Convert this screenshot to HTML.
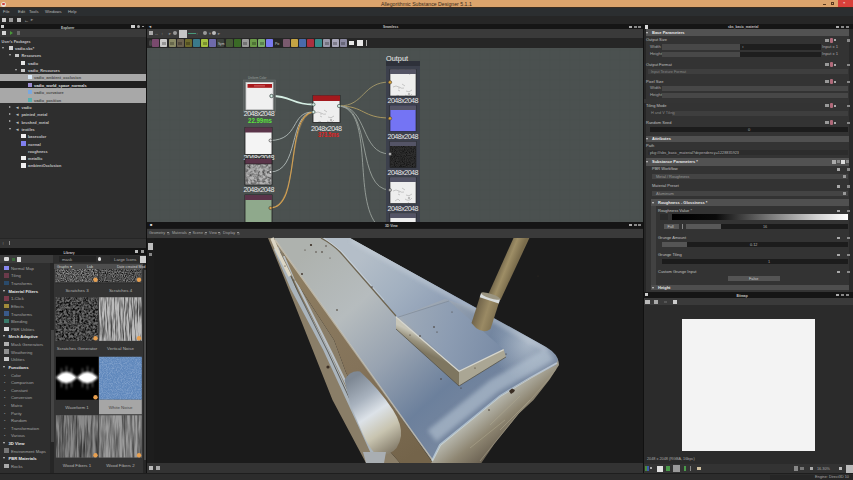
<!DOCTYPE html>
<html><head><meta charset="utf-8">
<style>
*{margin:0;padding:0;box-sizing:border-box}
html,body{width:853px;height:480px;overflow:hidden;background:#1e1e1e;font-family:"Liberation Sans",sans-serif;color:#c8c8c8}
.a{position:absolute}
.t{position:absolute;font-size:5px;line-height:6px;white-space:nowrap;padding-top:1px}
</style></head><body>
<!-- title bar -->
<div class="a" style="left:0;top:0;width:853px;height:8px;background:#dca46c;border-bottom:0.8px solid #3a2c20"></div>
<!-- menu -->
<div class="a" style="left:0;top:8px;width:853px;height:8px;background:#2b2e30"></div>
<div class="a" style="left:0;top:16px;width:853px;height:8px;background:#262626"></div>

<!-- explorer -->
<div class="a" style="left:0;top:24px;width:146px;height:224px;background:#2e2e2e"></div>
<div class="a" style="left:0;top:24px;width:146px;height:5px;background:#151515"></div>
<div class="a" style="left:0;top:29px;width:146px;height:8px;background:#3a3a3a"></div>
<div class="a" style="left:0;top:238px;width:146px;height:10px;background:#333"></div>


<!-- explorer content -->
<div class="a" style="left:0;top:73.6px;width:146px;height:7.4px;background:#a8a8a8"></div>
<div class="a" style="left:0;top:81px;width:146px;height:7px;background:#1f1f1f"></div>
<div class="a" style="left:0;top:88px;width:146px;height:15.3px;background:#a8a8a8"></div>
<div class="t" style="left:61px;top:23.9px;color:#c4c4c4;font-size:3.3px;font-weight:bold">Explorer</div>
<div class="a" style="left:1px;top:25.0px;width:3px;height:3px;background:#cfcfcf"></div>
<div class="a" style="left:2px;top:31.2px;width:3.5px;height:3.5px;background:#d8d8d8"></div>
<div class="a" style="left:10px;top:31px;width:0;height:0;border-top:2px solid transparent;border-bottom:2px solid transparent;border-left:3.5px solid #4a9a3a"></div>
<div class="a" style="left:17px;top:31.2px;width:3px;height:3.5px;background:#6a6a6a"></div>
<div class="t" style="left:1.5px;top:37.7px;color:#c2c2c2;font-size:3.7px;font-weight:bold">User's Packages</div>
<div class="a" style="left:2.0px;top:47.2px;width:0;height:0;border-left:1.5px solid transparent;border-right:1.5px solid transparent;border-top:2px solid #bbb"></div>
<div class="a" style="left:8.5px;top:46.2px;width:4px;height:4px;background:#d0d0d0"></div>
<div class="t" style="left:15px;top:45.2px;color:#c8c8c8;font-size:3.85px;font-weight:bold">vadio.sbs*</div>
<div class="a" style="left:8.5px;top:54.3px;width:0;height:0;border-left:1.5px solid transparent;border-right:1.5px solid transparent;border-top:2px solid #bbb"></div>
<div class="a" style="left:15px;top:53.8px;width:4px;height:3px;background:#c8c8c8"></div>
<div class="t" style="left:21.5px;top:52.3px;color:#c6c6c6;font-size:3.85px;font-weight:bold">Resources</div>
<div class="a" style="left:21px;top:60.9px;width:4px;height:4px;background:#e6e6e6"></div>
<div class="t" style="left:28px;top:59.9px;color:#c6c6c6;font-size:3.85px;font-weight:bold">vadio</div>
<div class="a" style="left:15.0px;top:69.4px;width:0;height:0;border-left:1.5px solid transparent;border-right:1.5px solid transparent;border-top:2px solid #bbb"></div>
<div class="a" style="left:21px;top:68.9px;width:4px;height:3px;background:#c8c8c8"></div>
<div class="t" style="left:28px;top:67.4px;color:#c6c6c6;font-size:3.85px;font-weight:bold">vadio_Resources</div>
<div class="a" style="left:27.5px;top:75.3px;width:4px;height:4px;background:#d8e8f8"></div>
<div class="t" style="left:34px;top:74.3px;color:#4a4a4a;font-size:3.85px;font-weight:bold">vadio_ambient_occlusion</div>
<div class="a" style="left:27.5px;top:82.5px;width:4px;height:4px;background:#9a8ad0"></div>
<div class="t" style="left:34px;top:81.5px;color:#e0e0e0;font-size:3.85px;font-weight:bold">vadio_world_space_normals</div>
<div class="a" style="left:27.5px;top:90.0px;width:4px;height:4px;background:#7aa8e0"></div>
<div class="t" style="left:34px;top:89.0px;color:#4a4a4a;font-size:3.85px;font-weight:bold">vadio_curvature</div>
<div class="a" style="left:27.5px;top:97.5px;width:4px;height:4px;background:#5ab0b0"></div>
<div class="t" style="left:34px;top:96.5px;color:#4a4a4a;font-size:3.85px;font-weight:bold">vadio_position</div>
<div class="a" style="left:9px;top:105.5px;width:0;height:0;border-top:1.5px solid transparent;border-bottom:1.5px solid transparent;border-left:2px solid #bbb"></div>
<div class="t" style="left:15px;top:104.0px;color:#bbb;font-size:4.5px;font-weight:normal">&#x25C4;</div>
<div class="t" style="left:21.5px;top:104.0px;color:#c2c2c2;font-size:3.85px;font-weight:bold">vadio</div>
<div class="a" style="left:9px;top:112.8px;width:0;height:0;border-top:1.5px solid transparent;border-bottom:1.5px solid transparent;border-left:2px solid #bbb"></div>
<div class="t" style="left:15px;top:111.3px;color:#bbb;font-size:4.5px;font-weight:normal">&#x25C4;</div>
<div class="t" style="left:21.5px;top:111.3px;color:#c2c2c2;font-size:3.85px;font-weight:bold">painted_metal</div>
<div class="a" style="left:9px;top:120.1px;width:0;height:0;border-top:1.5px solid transparent;border-bottom:1.5px solid transparent;border-left:2px solid #bbb"></div>
<div class="t" style="left:15px;top:118.6px;color:#bbb;font-size:4.5px;font-weight:normal">&#x25C4;</div>
<div class="t" style="left:21.5px;top:118.6px;color:#c2c2c2;font-size:3.85px;font-weight:bold">brushed_metal</div>
<div class="a" style="left:8.5px;top:127.9px;width:0;height:0;border-left:1.5px solid transparent;border-right:1.5px solid transparent;border-top:2px solid #bbb"></div>
<div class="t" style="left:15px;top:125.9px;color:#bbb;font-size:4.5px;font-weight:normal">&#x25C4;</div>
<div class="t" style="left:21.5px;top:125.9px;color:#c2c2c2;font-size:3.85px;font-weight:bold">textiles</div>
<div class="a" style="left:21px;top:133.9px;width:4.5px;height:4.5px;background:#f0f0f0"></div>
<div class="t" style="left:28px;top:133.2px;color:#c2c2c2;font-size:3.85px;font-weight:bold">basecolor</div>
<div class="a" style="left:21px;top:141.2px;width:4.5px;height:4.5px;background:#8080f0"></div>
<div class="t" style="left:28px;top:140.5px;color:#c2c2c2;font-size:3.85px;font-weight:bold">normal</div>
<div class="t" style="left:28px;top:147.8px;color:#c2c2c2;font-size:3.85px;font-weight:bold">roughness</div>
<div class="a" style="left:21px;top:155.8px;width:4.5px;height:4.5px;background:#f0f0f0"></div>
<div class="t" style="left:28px;top:155.1px;color:#c2c2c2;font-size:3.85px;font-weight:bold">metallic</div>
<div class="a" style="left:21px;top:163.2px;width:4.5px;height:4.5px;background:#f0f0f0"></div>
<div class="t" style="left:28px;top:162.4px;color:#c2c2c2;font-size:3.85px;font-weight:bold">ambientOcclusion</div>
<div class="a" style="left:0;top:237.5px;width:146px;height:0.8px;background:#262626"></div>
<div class="t" style="left:2px;top:239.5px;color:#aaa;font-size:4.5px;font-weight:normal">&#x2191;</div>
<div class="a" style="left:9px;top:240.5px;width:1px;height:4px;background:#888"></div>
<!-- library -->
<div class="a" style="left:0;top:248px;width:146px;height:225px;background:#2e2e2e"></div>
<div class="a" style="left:0;top:248px;width:146px;height:7px;background:#131313"></div>
<div class="a" style="left:0;top:255px;width:146px;height:8px;background:#3c3c3c"></div>


<!-- library content -->
<div class="t" style="left:63.5px;top:249.1px;color:#c4c4c4;font-size:3.3px;font-weight:bold">Library</div>
<div class="a" style="left:4px;top:257px;width:5px;height:4px;background:#ddd;border-radius:1px"></div>
<div class="a" style="left:12px;top:258px;width:3px;height:3px;background:#3a6a3a"></div>
<div class="a" style="left:17px;top:257px;width:4px;height:5px;background:#d8d8d8"></div>
<div class="a" style="left:0;top:263px;width:50px;height:210px;overflow:hidden">
</div>
<div class="a" style="left:4px;top:265.5px;width:4.5px;height:4.5px;background:#8888f0"></div>
<div class="t" style="left:11px;top:264.8px;color:#a4a4a4;font-size:4.2px">Normal Map</div>
<div class="a" style="left:4px;top:273.1px;width:4.5px;height:4.5px;background:#6a3a4a"></div>
<div class="t" style="left:11px;top:272.4px;color:#a4a4a4;font-size:4.2px">Tiling</div>
<div class="a" style="left:4px;top:280.7px;width:4.5px;height:4.5px;background:#2a4a6a"></div>
<div class="t" style="left:11px;top:280.0px;color:#a4a4a4;font-size:4.2px">Transforms</div>
<div class="a" style="left:2.5px;top:289.7px;width:0;height:0;border-left:1.5px solid transparent;border-right:1.5px solid transparent;border-top:2px solid #ccc"></div>
<div class="t" style="left:8.5px;top:287.7px;color:#e8e8e8;font-weight:bold;font-size:4.2px">Material Filters</div>
<div class="a" style="left:4px;top:296.0px;width:4.5px;height:4.5px;background:#7a3a4a"></div>
<div class="t" style="left:11px;top:295.3px;color:#a4a4a4;font-size:4.2px">1-Click</div>
<div class="a" style="left:4px;top:303.6px;width:4.5px;height:4.5px;background:#a08a3a"></div>
<div class="t" style="left:11px;top:302.9px;color:#a4a4a4;font-size:4.2px">Effects</div>
<div class="a" style="left:4px;top:311.2px;width:4.5px;height:4.5px;background:#3a5a8a"></div>
<div class="t" style="left:11px;top:310.5px;color:#a4a4a4;font-size:4.2px">Transforms</div>
<div class="a" style="left:4px;top:318.8px;width:4.5px;height:4.5px;background:#3a7a6a"></div>
<div class="t" style="left:11px;top:318.1px;color:#a4a4a4;font-size:4.2px">Blending</div>
<div class="a" style="left:4px;top:326.5px;width:4.5px;height:4.5px;background:#d8d8d8"></div>
<div class="t" style="left:11px;top:325.8px;color:#a4a4a4;font-size:4.2px">PBR Utilities</div>
<div class="a" style="left:2.5px;top:335.4px;width:0;height:0;border-left:1.5px solid transparent;border-right:1.5px solid transparent;border-top:2px solid #ccc"></div>
<div class="t" style="left:8.5px;top:333.4px;color:#e8e8e8;font-weight:bold;font-size:4.2px">Mesh Adaptive</div>
<div class="a" style="left:4px;top:341.7px;width:4.5px;height:4.5px;background:#b0b0b0"></div>
<div class="t" style="left:11px;top:341.0px;color:#a4a4a4;font-size:4.2px">Mask Generators</div>
<div class="a" style="left:4px;top:349.3px;width:4.5px;height:4.5px;background:#909090"></div>
<div class="t" style="left:11px;top:348.6px;color:#a4a4a4;font-size:4.2px">Weathering</div>
<div class="a" style="left:4px;top:356.9px;width:4.5px;height:4.5px;background:#c8c8c8"></div>
<div class="t" style="left:11px;top:356.2px;color:#a4a4a4;font-size:4.2px">Utilities</div>
<div class="a" style="left:2.5px;top:365.9px;width:0;height:0;border-left:1.5px solid transparent;border-right:1.5px solid transparent;border-top:2px solid #ccc"></div>
<div class="t" style="left:8.5px;top:363.9px;color:#e8e8e8;font-weight:bold;font-size:4.2px">Functions</div>
<div class="t" style="left:4px;top:371.5px;color:#9a9a9a;font-size:4.2px">&#x2022;</div>
<div class="t" style="left:11px;top:371.5px;color:#a4a4a4;font-size:4.2px">Color</div>
<div class="t" style="left:4px;top:379.1px;color:#9a9a9a;font-size:4.2px">&#x2022;</div>
<div class="t" style="left:11px;top:379.1px;color:#a4a4a4;font-size:4.2px">Comparison</div>
<div class="t" style="left:4px;top:386.7px;color:#9a9a9a;font-size:4.2px">&#x2022;</div>
<div class="t" style="left:11px;top:386.7px;color:#a4a4a4;font-size:4.2px">Constant</div>
<div class="t" style="left:4px;top:394.3px;color:#9a9a9a;font-size:4.2px">&#x2022;</div>
<div class="t" style="left:11px;top:394.3px;color:#a4a4a4;font-size:4.2px">Conversion</div>
<div class="t" style="left:4px;top:402.0px;color:#9a9a9a;font-size:4.2px">&#x2022;</div>
<div class="t" style="left:11px;top:402.0px;color:#a4a4a4;font-size:4.2px">Matrix</div>
<div class="t" style="left:4px;top:409.6px;color:#9a9a9a;font-size:4.2px">&#x2022;</div>
<div class="t" style="left:11px;top:409.6px;color:#a4a4a4;font-size:4.2px">Parity</div>
<div class="t" style="left:4px;top:417.2px;color:#9a9a9a;font-size:4.2px">&#x2022;</div>
<div class="t" style="left:11px;top:417.2px;color:#a4a4a4;font-size:4.2px">Random</div>
<div class="t" style="left:4px;top:424.8px;color:#9a9a9a;font-size:4.2px">&#x2022;</div>
<div class="t" style="left:11px;top:424.8px;color:#a4a4a4;font-size:4.2px">Transformation</div>
<div class="t" style="left:4px;top:432.4px;color:#9a9a9a;font-size:4.2px">&#x2022;</div>
<div class="t" style="left:11px;top:432.4px;color:#a4a4a4;font-size:4.2px">Various</div>
<div class="a" style="left:2.5px;top:442.1px;width:0;height:0;border-left:1.5px solid transparent;border-right:1.5px solid transparent;border-top:2px solid #ccc"></div>
<div class="t" style="left:8.5px;top:440.1px;color:#e8e8e8;font-weight:bold;font-size:4.2px">3D View</div>
<div class="a" style="left:4px;top:448.4px;width:4.5px;height:4.5px;background:#777"></div>
<div class="t" style="left:11px;top:447.7px;color:#a4a4a4;font-size:4.2px">Environment Maps</div>
<div class="a" style="left:2.5px;top:457.3px;width:0;height:0;border-left:1.5px solid transparent;border-right:1.5px solid transparent;border-top:2px solid #ccc"></div>
<div class="t" style="left:8.5px;top:455.3px;color:#e8e8e8;font-weight:bold;font-size:4.2px">PBR Materials</div>
<div class="a" style="left:4px;top:463.6px;width:4.5px;height:4.5px;background:#aaa"></div>
<div class="t" style="left:11px;top:462.9px;color:#a4a4a4;font-size:4.2px">Rocks</div>
<div class="a" style="left:50px;top:263px;width:4px;height:210px;background:#262626"></div>
<div class="a" style="left:50.5px;top:330px;width:3px;height:112px;background:#444"></div>
<!-- thumbs area -->
<div class="a" style="left:54px;top:263px;width:89px;height:210px;background:#333"></div>
<div class="a" style="left:53px;top:255px;width:93px;height:8px;background:#2e2e2e"></div>
<div class="a" style="left:143px;top:263px;width:3px;height:210px;background:#262626"></div>
<div class="a" style="left:143.5px;top:270px;width:2px;height:190px;background:#4a4a4a"></div>
<div class="a" style="left:59px;top:256px;width:37px;height:6px;background:#242424"></div>
<div class="t" style="left:62px;top:256px;color:#aaa;font-size:4.3px">mask</div>
<div class="a" style="left:97.5px;top:257px;width:3.5px;height:3.5px;background:#ddd;border-radius:50%"></div>
<div class="a" style="left:110px;top:256px;width:29px;height:6px;background:#2a2a2a"></div>
<div class="t" style="left:114px;top:256px;color:#aaa;font-size:4.3px">Large Icons</div>
<div class="a" style="left:139.5px;top:256px;width:6px;height:6.5px;background:#cfcfcf"></div>
<div class="a" style="left:54px;top:263.5px;width:89px;height:5.5px;background:#4e4e4e"></div>
<div class="t" style="left:57px;top:262.5px;color:#cfcfcf;font-size:3.6px">Graphs &#9662;</div>
<div class="t" style="left:87px;top:262.5px;color:#cfcfcf;font-size:3.6px">Lab</div>
<div class="t" style="left:117px;top:262.5px;color:#cfcfcf;font-size:3.6px">Date created Mod</div>


<!-- thumbnails -->
<svg class="a" style="left:54px;top:268.75px" width="89" height="204.25" viewBox="54 268.75 89 204.25">
<defs>
<filter id="nz1" x="0" y="0" width="100%" height="100%"><feTurbulence type="fractalNoise" baseFrequency="0.9" numOctaves="2" seed="3"/><feColorMatrix type="matrix" values="0 0 0 0 0  0 0 0 0 0  0 0 0 0 0  1.6 0 0 0 -0.45"/><feComposite in2="SourceGraphic" operator="in"/></filter>
<filter id="vstreak" x="0" y="0" width="100%" height="100%"><feTurbulence type="fractalNoise" baseFrequency="0.7 0.05" numOctaves="3" seed="7"/><feColorMatrix type="matrix" values="0 0 0 0 0  0 0 0 0 0  0 0 0 0 0  1.6 0 0 0 -0.62"/><feComposite in2="SourceGraphic" operator="in"/></filter>
<filter id="wstreak" x="0" y="0" width="100%" height="100%"><feTurbulence type="fractalNoise" baseFrequency="0.45 0.03" numOctaves="3" seed="11"/><feColorMatrix type="matrix" values="0 0 0 0 0  0 0 0 0 0  0 0 0 0 0  1.8 0 0 0 -0.6"/><feComposite in2="SourceGraphic" operator="in"/></filter>
<filter id="bnz" x="0" y="0" width="100%" height="100%"><feTurbulence type="fractalNoise" baseFrequency="1.2" numOctaves="1" seed="5"/><feColorMatrix type="matrix" values="0 0 0 0 0.85  0 0 0 0 0.9  0 0 0 0 1  1.4 0 0 0 -0.55"/><feComposite in2="SourceGraphic" operator="in"/></filter>
<filter id="nz2" x="0" y="0" width="100%" height="100%"><feTurbulence type="fractalNoise" baseFrequency="0.45" numOctaves="2" seed="9"/><feColorMatrix type="matrix" values="0 0 0 0 0  0 0 0 0 0  0 0 0 0 0  2.2 0 0 0 -0.75"/><feComposite in2="SourceGraphic" operator="in"/></filter>
<filter id="blob" x="-20%" y="-50%" width="140%" height="200%"><feGaussianBlur stdDeviation="1.1"/></filter>
</defs>
<!-- row1 scratches -->
<rect x="55.5" y="268.75" width="42.5" height="13.5" fill="#8a8a8a"/>
<rect x="55.5" y="268.75" width="42.5" height="13.5" fill="#111" filter="url(#nz1)"/>
<rect x="99" y="268.75" width="42.5" height="13.5" fill="#7a7a7a"/>
<rect x="99" y="268.75" width="42.5" height="13.5" fill="#111" filter="url(#nz1)"/>
<rect x="55.5" y="282.25" width="86" height="0.8" fill="#2a2a2a"/>
<!-- row2 -->
<rect x="55.5" y="297" width="42.8" height="43.6" fill="#6a6a6a"/>
<rect x="55.5" y="297" width="42.8" height="43.6" fill="#0c0c0c" filter="url(#nz2)"/>
<rect x="99" y="297" width="42.8" height="43.6" fill="#bcbcbc"/>
<rect x="99" y="297" width="42.8" height="43.6" fill="#555" filter="url(#vstreak)"/>
<!-- row3 -->
<rect x="55.9" y="356.5" width="42.5" height="43" fill="#000"/>
<g filter="url(#blob)" fill="#fff">
<path d="M56 377.3 Q66 366 77 377.3 Q66 388.6 56 377.3 Z"/>
<path d="M77 377.3 Q87 366 98 377.3 Q87 388.6 77 377.3 Z"/>
<rect x="61" y="368" width="0.8" height="19" opacity="0.6"/><rect x="66" y="366" width="0.8" height="23" opacity="0.6"/><rect x="71" y="368" width="0.8" height="19" opacity="0.6"/>
<rect x="82" y="368" width="0.8" height="19" opacity="0.6"/><rect x="87" y="366" width="0.8" height="23" opacity="0.6"/><rect x="92" y="368" width="0.8" height="19" opacity="0.6"/>
</g>
<path d="M58 377.3 Q66 370 75 377.3 Q66 384.6 58 377.3 Z" fill="#fff"/>
<path d="M79 377.3 Q87 370 96 377.3 Q87 384.6 79 377.3 Z" fill="#fff"/>
<rect x="99" y="356.5" width="42.8" height="43" fill="#6088bc"/>
<rect x="99" y="356.5" width="42.8" height="43" fill="#fff" filter="url(#bnz)" opacity="0.45"/>
<rect x="99" y="399.5" width="42.8" height="14.5" fill="#a6a6a6"/>
<!-- row4 -->
<rect x="55.9" y="415" width="42.5" height="42.3" fill="#8a8a8a"/>
<rect x="55.9" y="415" width="42.5" height="42.3" fill="#2a2a2a" filter="url(#wstreak)" opacity="0.75"/>
<rect x="99" y="415" width="42.8" height="42.3" fill="#9c9c9c"/>
<rect x="99" y="415" width="42.8" height="42.3" fill="#3a3a3a" filter="url(#wstreak)" opacity="0.6"/>
<!-- orange badges -->
<g fill="#e8a050">
<circle cx="95.5" cy="279.5" r="2.2"/><circle cx="139" cy="279.5" r="2.2"/>
<circle cx="95.5" cy="338" r="2.2"/><circle cx="139" cy="338" r="2.2"/>
<circle cx="95.5" cy="397" r="2.2"/>
<circle cx="95.5" cy="455" r="2.2"/><circle cx="139" cy="455" r="2.2"/>
</g>
<g font-family="Liberation Sans" font-size="4.4" fill="#b4b4b4" text-anchor="middle">
<text x="77" y="291.5">Scratches 3</text><text x="120.5" y="291.5">Scratches 4</text>
<text x="77" y="350">Scratches Generator</text><text x="120.5" y="350">Vertical Noise</text>
<text x="77" y="408.5">Waveform 1</text><text x="120.5" y="408.5" fill="#444">White Noise</text>
<text x="77" y="467">Wood Fibers 1</text><text x="120.5" y="467">Wood Fibers 2</text>
</g>
</svg>

<!-- splitter -->
<div class="a" style="left:146px;top:24px;width:1px;height:449px;background:#111"></div>

<!-- graph -->
<div class="a" style="left:147px;top:24px;width:496px;height:198px;background:#4b5150"></div>
<div class="a" style="left:147px;top:24px;width:496px;height:5px;background:#151515"></div>
<div class="a" style="left:147px;top:29px;width:496px;height:9px;background:#3a3a3a"></div>
<div class="a" style="left:147px;top:38px;width:496px;height:10px;background:#262626"></div>


<!-- graph content -->
<svg class="a" style="left:147px;top:48px" width="496" height="174" viewBox="147 48 496 174">
<defs>
<pattern id="grid" x="0" y="0" width="10" height="10" patternUnits="userSpaceOnUse">
<rect x="0" y="0" width="10" height="10" fill="none" stroke="#474d4c" stroke-width="0.5"/>
</pattern>
<filter id="gnz" x="0" y="0" width="100%" height="100%"><feTurbulence type="fractalNoise" baseFrequency="1.1" numOctaves="2" seed="4"/><feColorMatrix type="matrix" values="0 0 0 0 0  0 0 0 0 0  0 0 0 0 0  1.5 0 0 0 -0.6"/><feComposite in2="SourceGraphic" operator="in"/></filter>
<filter id="gnz2" x="0" y="0" width="100%" height="100%"><feTurbulence type="fractalNoise" baseFrequency="0.35" numOctaves="3" seed="21"/><feColorMatrix type="matrix" values="0 0 0 0 0  0 0 0 0 0  0 0 0 0 0  1.6 0 0 0 -0.55"/><feComposite in2="SourceGraphic" operator="in"/></filter>
<pattern id="sketch" width="26" height="26" patternUnits="userSpaceOnUse">
<rect width="26" height="26" fill="#eeeeee"/>
<path d="M3 9 q3 -2 6 0 t5 1 M12 6 l3 2 M16 13 q3 2 6 -1 M15 17 q4 3 7 -1 M5 19 l3 -2 l2 2 M18 20 l2 3 M8 12 l2 1" stroke="#a8a8a8" stroke-width="0.6" fill="none"/>
<circle cx="19" cy="16" r="1.2" fill="#bbb"/><circle cx="9" cy="10" r="0.8" fill="#c4c4c4"/>
</pattern>
</defs>
<rect x="147" y="48" width="496" height="174" fill="url(#grid)"/>
<!-- curves left -->
<path d="M271.5 96 C292 96 292 104.5 313 104.5" stroke="#d6efe4" stroke-width="1.8" fill="none"/>
<path d="M270 140.5 C300 140 290 112 313 112" stroke="#a7b0ae" stroke-width="1" fill="none"/>
<path d="M270 172 C300 172 288 114 313 112" stroke="#a7b0ae" stroke-width="1" fill="none"/>
<path d="M270 208 C302 208 284 116 313 112" stroke="#d9a24c" stroke-width="1.1" fill="none"/>
<path d="M270 208 C300 206 286 120 313 112" stroke="#b89868" stroke-width="0.6" fill="none" opacity="0.7"/>
<!-- curves right -->
<path d="M339 106 C365 106 362 82 390 82" stroke="#9c9268" stroke-width="1" fill="none"/>
<path d="M339 106 C365 106 362 118 390 118" stroke="#a89660" stroke-width="1" fill="none"/>
<path d="M339 106 C368 106 360 154 390 154" stroke="#9aa29c" stroke-width="0.9" fill="none"/>
<path d="M339 106 C372 106 356 190 390 190" stroke="#9aa29c" stroke-width="0.9" fill="none"/>
<path d="M339 106 C375 110 352 200 378 226" stroke="#9aa29c" stroke-width="0.9" fill="none"/>
<!-- node1 -->
<rect x="243.5" y="80" width="32" height="32" fill="#575d5c" stroke="#6c7271" stroke-width="0.5"/>
<rect x="246" y="82.5" width="27" height="27" fill="#f0f0f0" stroke="#c9c9c9" stroke-width="0.8"/>
<rect x="247.5" y="84" width="24.5" height="3.8" fill="#a8191c"/>
<rect x="254" y="85.4" width="11" height="1" fill="#d46a6a"/>
<circle cx="271.5" cy="96" r="1.7" fill="#d6eee4" stroke="#243230" stroke-width="0.7"/>
<text x="248" y="79.3" font-family="Liberation Sans" fill="#9aa09f" font-size="3">Uniform Color</text>
<!-- node2 -->
<rect x="313" y="95.5" width="27" height="27" fill="url(#sketch)" stroke="#1c1c1c" stroke-width="0.8"/>
<rect x="313" y="95.5" width="27" height="5.5" fill="#a3191d"/>
<circle cx="313.5" cy="104.5" r="1.6" fill="#cfe9df" stroke="#2c3a36" stroke-width="0.6"/>
<circle cx="313.5" cy="112" r="1.6" fill="#cfe9df" stroke="#2c3a36" stroke-width="0.6"/>
<circle cx="339" cy="106" r="1.6" fill="#cfe9df" stroke="#2c3a36" stroke-width="0.6"/>
<!-- node3 -->
<rect x="245" y="127.5" width="27" height="27" fill="#f4f4f4" stroke="#1c1c1c" stroke-width="0.8"/>
<rect x="245" y="127.5" width="27" height="5" fill="#5a3449"/>
<circle cx="270.5" cy="140.5" r="1.5" fill="#e6e6e6" stroke="#333" stroke-width="0.6"/>
<!-- node4 -->
<rect x="245" y="159" width="27" height="26" fill="#b4b4b4" stroke="#1c1c1c" stroke-width="0.8"/>
<rect x="245.5" y="164" width="26" height="20.5" fill="#3a3a3a" filter="url(#gnz2)" opacity="0.7"/>
<rect x="245" y="159" width="27" height="5" fill="#5a3449"/>
<circle cx="270.5" cy="172" r="1.5" fill="#e6e6e6" stroke="#333" stroke-width="0.6"/>
<!-- node5 -->
<rect x="245" y="195" width="27" height="28" fill="#8fa98c" stroke="#1c1c1c" stroke-width="0.8"/>
<rect x="245" y="195" width="27" height="5" fill="#5a3449"/>
<circle cx="270.5" cy="208" r="1.6" fill="#e0a448" stroke="#333" stroke-width="0.6"/>
<!-- output frame -->
<rect x="386" y="61" width="34" height="165" fill="#3c404c"/>
<rect x="386" y="61" width="34" height="5" fill="#2e313a"/>
<g id="outs">
<rect x="390" y="69.5" width="26" height="26.5" fill="url(#sketch)" stroke="#1c1c1c" stroke-width="0.6"/>
<rect x="390" y="69.5" width="26" height="4.5" fill="#545466"/>
<rect x="390" y="105.5" width="26" height="26" fill="#7474f4" stroke="#1c1c1c" stroke-width="0.6"/>
<rect x="390" y="105.5" width="26" height="4.5" fill="#545466"/>
<rect x="390" y="141.5" width="26" height="26" fill="#2e2e2e" stroke="#1c1c1c" stroke-width="0.6"/>
<rect x="390.5" y="146" width="25" height="21" fill="#9a9a9a" filter="url(#gnz)"/>
<rect x="390" y="141.5" width="26" height="4.5" fill="#545466"/>
<rect x="390" y="177.5" width="26" height="26" fill="url(#sketch)" stroke="#1c1c1c" stroke-width="0.6"/>
<rect x="390" y="177.5" width="26" height="4.5" fill="#545466"/>
<rect x="390" y="213.5" width="26" height="26" fill="#eeeeee" stroke="#1c1c1c" stroke-width="0.6"/>
<rect x="390" y="213.5" width="26" height="4.5" fill="#545466"/>
</g>
<circle cx="390" cy="82.3" r="1.7" fill="#d9a43a" stroke="#333" stroke-width="0.5"/>
<circle cx="390" cy="118.4" r="1.7" fill="#d9a43a" stroke="#333" stroke-width="0.5"/>
<circle cx="390" cy="154" r="1.5" fill="#c8c8c8" stroke="#333" stroke-width="0.5"/>
<circle cx="390" cy="190" r="1.5" fill="#c8c8c8" stroke="#333" stroke-width="0.5"/>
<g font-family="Liberation Sans" fill="#e8e8e8" font-size="7.2" text-anchor="start" lengthAdjust="spacingAndGlyphs">
<text x="243.7" y="115.7" textLength="31">2048x2048</text>
<text x="311" y="130.5" textLength="31">2048x2048</text>
<text x="243.5" y="159.8" textLength="31">2048x2048</text>
<text x="243.5" y="192" textLength="31">2048x2048</text>
<text x="387.5" y="102.5" textLength="31">2048x2048</text>
<text x="387.5" y="138.5" textLength="31">2048x2048</text>
<text x="387.5" y="174.5" textLength="31">2048x2048</text>
<text x="387.5" y="210.5" textLength="31">2048x2048</text>
</g>
<text x="248" y="122.5" textLength="24" lengthAdjust="spacingAndGlyphs" font-family="Liberation Sans" font-weight="bold" fill="#5ae43c" font-size="7">22.99ms</text>
<text x="318" y="137" textLength="21" lengthAdjust="spacingAndGlyphs" font-family="Liberation Sans" font-weight="bold" fill="#e21e1e" font-size="7">373.5ms</text>
<rect x="245" y="158.6" width="27" height="5.4" fill="#5a3449" stroke="#1c1c1c" stroke-width="0.6"/>
<text x="386" y="60.8" font-family="Liberation Sans" fill="#ececec" font-size="8" textLength="22" lengthAdjust="spacingAndGlyphs">Output</text>
</svg>

<!-- 3d view -->
<div class="a" style="left:147px;top:222px;width:496px;height:251px;background:#1a1a1a"></div>
<div class="a" style="left:147px;top:222px;width:496px;height:6px;background:#151515"></div>
<div class="a" style="left:147px;top:228.5px;width:496px;height:9.5px;background:#3a3a3a"></div>

<!-- 3d content -->
<svg class="a" style="left:147px;top:236px" width="496" height="227" viewBox="147 236 496 227">
<defs>
<linearGradient id="topg" x1="310" y1="250" x2="470" y2="430" gradientUnits="userSpaceOnUse">
<stop offset="0" stop-color="#aeb2ae"/>
<stop offset="0.3" stop-color="#b6bcbe"/>
<stop offset="0.55" stop-color="#98a3b1"/>
<stop offset="0.8" stop-color="#6c809c"/>
<stop offset="1" stop-color="#7888a0"/>
</linearGradient>
<linearGradient id="topr" x1="370" y1="250" x2="440" y2="320" gradientUnits="userSpaceOnUse">
<stop offset="0" stop-color="#b4bec8"/>
<stop offset="0.5" stop-color="#a2b0c0"/>
<stop offset="1" stop-color="#8c9cb4"/>
</linearGradient>
<linearGradient id="corner" x1="470" y1="330" x2="540" y2="400" gradientUnits="userSpaceOnUse">
<stop offset="0" stop-color="#8a9cb4"/>
<stop offset="0.5" stop-color="#7088a6"/>
<stop offset="1" stop-color="#98a8b8"/>
</linearGradient>
<linearGradient id="frontg" x1="498" y1="398" x2="526" y2="432" gradientUnits="userSpaceOnUse">
<stop offset="0" stop-color="#b6b6ac"/>
<stop offset="0.45" stop-color="#8e8672"/>
<stop offset="1" stop-color="#62584a"/>
</linearGradient>
<linearGradient id="cylg" x1="350" y1="380" x2="395" y2="448" gradientUnits="userSpaceOnUse">
<stop offset="0" stop-color="#7e8894"/>
<stop offset="0.28" stop-color="#a8b2be"/>
<stop offset="0.5" stop-color="#dce2e8"/>
<stop offset="0.75" stop-color="#c8c4b0"/>
<stop offset="1" stop-color="#8a8270"/>
</linearGradient>
<linearGradient id="rodg" x1="498" y1="266" x2="513" y2="272" gradientUnits="userSpaceOnUse">
<stop offset="0" stop-color="#6a5e44"/>
<stop offset="0.5" stop-color="#9e8e66"/>
<stop offset="1" stop-color="#7a6c4c"/>
</linearGradient>
<linearGradient id="collg" x1="474" y1="310" x2="496" y2="317" gradientUnits="userSpaceOnUse">
<stop offset="0" stop-color="#6a5e46"/>
<stop offset="0.55" stop-color="#9a8a64"/>
<stop offset="1" stop-color="#7e7050"/>
</linearGradient>
<linearGradient id="bandg" x1="300" y1="280" x2="420" y2="450" gradientUnits="userSpaceOnUse">
<stop offset="0" stop-color="#8c7c60"/>
<stop offset="0.5" stop-color="#84735a"/>
<stop offset="1" stop-color="#74644a"/>
</linearGradient>
<linearGradient id="highl" x1="556" y1="365" x2="436" y2="452" gradientUnits="userSpaceOnUse">
<stop offset="0" stop-color="#dfe6ea"/>
<stop offset="0.5" stop-color="#c8dcec"/>
<stop offset="1" stop-color="#d6e8f2"/>
</linearGradient>
<radialGradient id="cornerlight" cx="528" cy="343" r="38" gradientUnits="userSpaceOnUse"><stop offset="0" stop-color="#bcc8d4" stop-opacity="0.75"/><stop offset="1" stop-color="#bcc8d4" stop-opacity="0"/></radialGradient>
<clipPath id="topclip"><path d="M274 238 L350 238 L546 347 Q561 356 558 366 L530 378 L500 396 L440 445 L433 461 L274 238 Z"/></clipPath>
<filter id="soft" x="-20%" y="-20%" width="140%" height="140%"><feGaussianBlur stdDeviation="2"/></filter>
</defs>
<rect x="147" y="238" width="496" height="225" fill="#1b1b1b"/>
<!-- rail (left side) -->
<path d="M268 238 L285 280 L332.5 400 L366 463 L400 463 L380 440 L346 372.5 L334 340 L295 280 L277 238 Z" fill="#8a7e68"/>
<path d="M276 248 L293 288 L325 348 L349 400 L372 450 L379 463" stroke="#aab4bc" stroke-width="5" fill="none"/>
<path d="M280 252 L298 292 L328 352 L352 404 L376 452" stroke="#4a4840" stroke-width="0.8" fill="none"/>
<path d="M284 256 L302 294 L332 354 L357 406 L381 454" stroke="#b8c0c6" stroke-width="2.2" fill="none"/>
<path d="M272 238 L277 250 L283 262 L290 276" stroke="#dcd6c4" stroke-width="3.5" fill="none"/>
<!-- brown band -->
<path d="M277 238 L295 280 L334 340 L346 372.5 L380 440 L400 463 L433 463 L274 238 Z" fill="url(#bandg)"/>
<!-- top surface -->
<path d="M274 238 L350 238 L546 347 Q561 356 558 366 L530 378 L500 396 L440 445 L433 461 L274 238 Z" fill="url(#topg)"/>
<g clip-path="url(#topclip)"><rect x="480" y="300" width="90" height="80" fill="url(#cornerlight)"/></g>
<g clip-path="url(#topclip)"><path d="M550 354 L524 369 L494 386 L432 436" stroke="#bccad8" stroke-width="14" fill="none" opacity="0.55" filter="url(#soft)"/></g>
<path d="M275 240 L433 461" stroke="#cfcbbb" stroke-width="1.6" fill="none" opacity="0.8"/>
<!-- right portion beyond ridge -->
<path d="M321 238 L350 238 L482 311 L445 299 L397 317.5 L382 300 L340 252 Q332 244 321 238 Z" fill="url(#topr)"/>
<g clip-path="url(#topclip)"><path d="M352 240 L546 349" stroke="#d0d8e0" stroke-width="5" fill="none" opacity="0.45" filter="url(#soft)"/></g>
<!-- corner region -->

<path d="M321 238 Q332 244 340 252 L382 300 L396 316" stroke="#6e6450" stroke-width="1.2" fill="none"/>
<path d="M324 238 Q334 245 342 252 L384 300" stroke="#dfe4e6" stroke-width="0.7" fill="none" opacity="0.7"/>
<!-- front face -->
<path d="M558 360 L559 365 L549.6 379.6 L533.5 400 L518.7 413.7 L495 443 L481 463.5 L431 463.5 L440 445 L500 396 L530 378 L556 365 Z" fill="url(#frontg)"/>
<path d="M557 363 L530 378 L500 396 L440 445 L432 461" stroke="url(#highl)" stroke-width="2" fill="none" opacity="0.6"/>
<path d="M556 369 L547 381 L518 414 L480 461" stroke="#a49c88" stroke-width="1" fill="none" opacity="0.6"/>
<path d="M520 396 L490 425 M505 420 L470 448 M530 400 L500 430" stroke="#b4ac94" stroke-width="0.8" fill="none" opacity="0.6"/>
<!-- cylinder -->
<path d="M344.6 380 Q350 370 360 371.5 Q380 390 393 410 Q402 424 401 436 Q399 450 388 454 L376 455 Q368 446 362 432 L350 404 Z" fill="url(#cylg)"/>
<path d="M363 452 L386 452 L384 463 L366 463 Z" fill="#a9aeb2"/>
<!-- plate -->
<linearGradient id="plateg" x1="400" y1="320" x2="500" y2="350" gradientUnits="userSpaceOnUse"><stop offset="0" stop-color="#9eaab8"/><stop offset="0.5" stop-color="#8c9cb2"/><stop offset="1" stop-color="#7a8ca6"/></linearGradient>
<linearGradient id="rimg" x1="420" y1="335" x2="414" y2="348" gradientUnits="userSpaceOnUse"><stop offset="0" stop-color="#c8c6b8"/><stop offset="0.5" stop-color="#9a9480"/><stop offset="1" stop-color="#7e7660"/></linearGradient>
<path d="M400 316 L449 301 L503.7 349.6 L459 371.3 Z" fill="url(#plateg)"/>
<path d="M397 317.5 L449 301" stroke="#7e8a98" stroke-width="0.7" fill="none"/>
<path d="M396 317 L459 371.3 L459 386 L396 329 Z" fill="url(#rimg)"/>
<path d="M459 371.3 L503.7 349.6 L506 357 L459 386 Z" fill="#aaa694"/>
<path d="M396 317 L459 371.3 L503.7 349.6" stroke="#d6d6ce" stroke-width="1.2" fill="none"/>
<path d="M396 329 L459 386 L506 357" stroke="#4e4a40" stroke-width="0.7" fill="none"/>
<!-- rod -->
<path d="M513.5 238 L529.4 238 L500.5 300 L487.5 296 Z" fill="url(#rodg)"/>
<path d="M480.5 294.9 L499.5 301.1 L490.5 329.1 Q484 334 476 328 L471.5 322.9 Z" fill="url(#collg)"/>
<g transform="rotate(18 490 298)">
<rect x="480" y="296" width="20" height="4.5" fill="#d8dcdc"/>
<ellipse cx="490" cy="296" rx="10" ry="2.2" fill="#9a9480"/>
</g>
<!-- spots -->
<g fill="#3a2e24">
<circle cx="311" cy="245" r="1.1"/><circle cx="322" cy="252" r="0.8"/><circle cx="316" cy="252" r="0.7"/>
<circle cx="337" cy="310" r="0.8"/><circle cx="372" cy="287" r="0.7"/><circle cx="302" cy="274" r="0.9"/>
<circle cx="441" cy="379" r="0.7"/><circle cx="410" cy="335" r="0.6"/><circle cx="420" cy="336" r="0.8"/>
<path d="M509 391 l3 -2.5 l3 1.5 l-1 2 l-3 2 z"/><circle cx="489" cy="410" r="0.8"/><circle cx="328" cy="367" r="1.6"/>
<circle cx="506" cy="354" r="0.6"/><circle cx="538" cy="276" r="0.5"/>
<circle cx="305" cy="250" r="0.6"/><circle cx="330" cy="258" r="0.5"/><circle cx="326" cy="246" r="0.7"/><circle cx="285" cy="266" r="0.6"/><circle cx="294" cy="280" r="0.5"/><circle cx="434" cy="327" r="0.8"/><circle cx="437" cy="332" r="0.6"/><circle cx="452" cy="312" r="0.5"/><circle cx="475" cy="368" r="0.6"/><circle cx="461" cy="388" r="0.6"/>
</g>
</svg>
<div class="a" style="left:147px;top:463px;width:496px;height:10px;background:#333"></div>

<div class="a" style="left:643px;top:24px;width:1px;height:449px;background:#111"></div>
<!-- properties -->
<div class="a" style="left:644px;top:24px;width:209px;height:268px;background:#353535"></div>
<div class="a" style="left:644px;top:24px;width:209px;height:5px;background:#151515"></div>


<!-- properties content -->
<div class="a" style="left:644px;top:29px;width:209px;height:263px;background:#333333;"></div>
<div class="a" style="left:849px;top:29px;width:4px;height:263px;background:#2a2a2a;"></div>
<div class="a" style="left:644px;top:29px;width:1.5px;height:263px;background:#262626;"></div>
<div class="t" style="left:728px;top:23.4px;color:#c4c4c4;font-size:3.3px;font-weight:bold">sbs_basic_material</div>
<div class="a" style="left:645px;top:25px;width:3px;height:3.5px;background:#d8d8d8;"></div>
<div class="a" style="left:836px;top:25.5px;width:3px;height:2.5px;background:#aaa;"></div>
<div class="a" style="left:841px;top:25.5px;width:2.5px;height:2.5px;background:#888;"></div>
<div class="a" style="left:846px;top:25.5px;width:2.5px;height:2.5px;background:#888;"></div>
<div class="a" style="left:645.5px;top:29px;width:203.5px;height:7.2px;background:#525252;"></div>
<div class="a" style="left:645.5px;top:31.8px;width:0;height:0;border-left:1.5px solid transparent;border-right:1.5px solid transparent;border-top:2px solid #ccc"></div>
<div class="t" style="left:652px;top:28.8px;color:#e8e8e8;font-size:4.0px;font-weight:bold">Base Parameters</div>
<div class="t" style="left:646px;top:36.3px;color:#c0c0c0;font-size:4.0px;font-weight:normal">Output Size</div>
<div class="a" style="left:825px;top:38.8px;width:4px;height:3px;background:#999;"></div>
<div class="a" style="left:830px;top:37.8px;width:3px;height:5px;background:#b06a7a;border-radius:1px"></div>
<div class="a" style="left:834px;top:39.3px;width:2px;height:2px;background:#aaa;"></div>
<div class="a" style="left:847px;top:39.3px;width:2.5px;height:2.5px;background:#888;"></div>
<div class="t" style="left:650px;top:42.8px;color:#a8a8a8;font-size:4.2px;font-weight:normal">Width</div>
<div class="a" style="left:662px;top:44px;width:78px;height:5.6px;background:#484848;"></div>
<div class="a" style="left:740px;top:44px;width:81px;height:5.6px;background:#1e1e1e;"></div>
<div class="t" style="left:742px;top:42.8px;color:#bbb;font-size:3.5px;font-weight:normal">&#x2195;</div>
<div class="t" style="left:822px;top:42.8px;color:#aaa;font-size:4.2px;font-weight:normal">Input x 1</div>
<div class="t" style="left:650px;top:50.0px;color:#a8a8a8;font-size:4.2px;font-weight:normal">Height</div>
<div class="a" style="left:662px;top:51.5px;width:78px;height:5.3px;background:#484848;"></div>
<div class="a" style="left:740px;top:51.5px;width:81px;height:5.3px;background:#1e1e1e;"></div>
<div class="t" style="left:822px;top:50.0px;color:#aaa;font-size:4.2px;font-weight:normal">Input x 1</div>
<div class="t" style="left:646px;top:60.6px;color:#c0c0c0;font-size:4.0px;font-weight:normal">Output Format</div>
<div class="a" style="left:825px;top:63.099999999999994px;width:4px;height:3px;background:#999;"></div>
<div class="a" style="left:830px;top:62.099999999999994px;width:3px;height:5px;background:#b06a7a;border-radius:1px"></div>
<div class="a" style="left:834px;top:63.599999999999994px;width:2px;height:2px;background:#aaa;"></div>
<div class="a" style="left:847px;top:63.599999999999994px;width:2.5px;height:2.5px;background:#888;"></div>
<div class="a" style="left:648px;top:69px;width:200px;height:5.2px;background:#3e3e3e;"></div>
<div class="t" style="left:651px;top:67.6px;color:#888;font-size:3.8px;font-weight:normal">Input Texture Format</div>
<div class="t" style="left:646px;top:77.8px;color:#c0c0c0;font-size:4.0px;font-weight:normal">Pixel Size</div>
<div class="a" style="left:825px;top:80.3px;width:4px;height:3px;background:#999;"></div>
<div class="a" style="left:830px;top:79.3px;width:3px;height:5px;background:#b06a7a;border-radius:1px"></div>
<div class="a" style="left:834px;top:80.8px;width:2px;height:2px;background:#aaa;"></div>
<div class="a" style="left:847px;top:80.8px;width:2.5px;height:2.5px;background:#888;"></div>
<div class="t" style="left:650px;top:84.0px;color:#a8a8a8;font-size:4.2px;font-weight:normal">Width</div>
<div class="a" style="left:662px;top:85.6px;width:186px;height:5px;background:#474747;"></div>
<div class="t" style="left:650px;top:91.2px;color:#a8a8a8;font-size:4.2px;font-weight:normal">Height</div>
<div class="a" style="left:662px;top:92.9px;width:186px;height:4.7px;background:#474747;"></div>
<div class="a" style="left:644px;top:99px;width:205px;height:4px;background:#343434;"></div>
<div class="t" style="left:646px;top:101.6px;color:#c0c0c0;font-size:4.0px;font-weight:normal">Tiling Mode</div>
<div class="a" style="left:825px;top:104.1px;width:4px;height:3px;background:#999;"></div>
<div class="a" style="left:830px;top:103.1px;width:3px;height:5px;background:#b06a7a;border-radius:1px"></div>
<div class="a" style="left:834px;top:104.6px;width:2px;height:2px;background:#aaa;"></div>
<div class="a" style="left:847px;top:104.6px;width:2.5px;height:2.5px;background:#888;"></div>
<div class="a" style="left:672px;top:110.6px;width:176px;height:5.6px;background:#3e3e3e;"></div>
<div class="t" style="left:651px;top:109.4px;color:#888;font-size:3.8px;font-weight:normal">H and V Tiling</div>
<div class="t" style="left:646px;top:118.5px;color:#c0c0c0;font-size:4.0px;font-weight:normal">Random Seed</div>
<div class="a" style="left:825px;top:121.0px;width:4px;height:3px;background:#999;"></div>
<div class="a" style="left:830px;top:120.0px;width:3px;height:5px;background:#b06a7a;border-radius:1px"></div>
<div class="a" style="left:834px;top:121.5px;width:2px;height:2px;background:#aaa;"></div>
<div class="a" style="left:847px;top:121.5px;width:2.5px;height:2.5px;background:#888;"></div>
<div class="a" style="left:650px;top:126.9px;width:198px;height:5px;background:#1c1c1c;"></div>
<div class="t" style="left:748px;top:125.5px;color:#aaa;font-size:4.0px;font-weight:normal">0</div>
<div class="a" style="left:645.5px;top:135.6px;width:203.5px;height:6.3px;background:#505050;"></div>
<div class="a" style="left:645.5px;top:137.8px;width:0;height:0;border-left:1.5px solid transparent;border-right:1.5px solid transparent;border-top:2px solid #ccc"></div>
<div class="t" style="left:652px;top:134.8px;color:#e8e8e8;font-size:4.0px;font-weight:bold">Attributes</div>
<div class="t" style="left:646px;top:141.6px;color:#c0c0c0;font-size:4.0px;font-weight:normal">Path</div>
<div class="a" style="left:648px;top:150px;width:200px;height:5px;background:#2c2c2c;"></div>
<div class="t" style="left:650px;top:148.6px;color:#b0b0b0;font-size:3.8px;font-weight:normal">pkg:///sbs_basic_material?dependency=1228835923</div>
<div class="a" style="left:645.5px;top:158px;width:203.5px;height:7.6px;background:#525252;"></div>
<div class="a" style="left:645.5px;top:160.8px;width:0;height:0;border-left:1.5px solid transparent;border-right:1.5px solid transparent;border-top:2px solid #ccc"></div>
<div class="t" style="left:652px;top:157.8px;color:#e8e8e8;font-size:4.0px;font-weight:bold">Substance Parameters *</div>
<div class="a" style="left:832px;top:159.5px;width:4px;height:4px;background:#aaa;"></div>
<div class="a" style="left:837px;top:160px;width:3px;height:3px;background:#888;"></div>
<div class="a" style="left:841px;top:159.5px;width:4px;height:4px;background:#ddd;"></div>
<div class="a" style="left:846px;top:160px;width:3px;height:3px;background:#888;"></div>
<div class="t" style="left:652px;top:165.4px;color:#c0c0c0;font-size:4.0px;font-weight:normal">PBR Workflow</div>
<div class="a" style="left:837px;top:168px;width:2.5px;height:2.5px;background:#aaa;"></div>
<div class="a" style="left:847px;top:168px;width:2.5px;height:2.5px;background:#888;"></div>
<div class="a" style="left:652px;top:173.75px;width:196px;height:5.65px;background:#444;"></div>
<div class="t" style="left:656px;top:172.6px;color:#999;font-size:4.0px;font-weight:normal">Metal / Roughness</div>
<div class="a" style="left:843px;top:175px;width:3px;height:3px;background:#999;"></div>
<div class="t" style="left:652px;top:182.0px;color:#c0c0c0;font-size:4.0px;font-weight:normal">Material Preset</div>
<div class="a" style="left:837px;top:185px;width:2.5px;height:2.5px;background:#aaa;"></div>
<div class="a" style="left:847px;top:185px;width:2.5px;height:2.5px;background:#888;"></div>
<div class="a" style="left:652px;top:191.25px;width:196px;height:4.6px;background:#444;"></div>
<div class="t" style="left:656px;top:189.6px;color:#999;font-size:4.0px;font-weight:normal">Aluminum</div>
<div class="a" style="left:843px;top:192px;width:3px;height:3px;background:#999;"></div>
<div class="a" style="left:651px;top:199.4px;width:4.5px;height:91px;background:#424242;"></div>
<div class="a" style="left:651px;top:199.4px;width:197.5px;height:6.2px;background:#505050;"></div>
<div class="a" style="left:651.5px;top:201.5px;width:0;height:0;border-left:1.5px solid transparent;border-right:1.5px solid transparent;border-top:2px solid #ccc"></div>
<div class="t" style="left:658px;top:198.5px;color:#e8e8e8;font-size:4.0px;font-weight:bold">Roughness - Glossiness *</div>
<div class="t" style="left:658px;top:206.6px;color:#c0c0c0;font-size:4.0px;font-weight:normal">Roughness Value *</div>
<div class="a" style="left:837px;top:209.5px;width:2.5px;height:2.5px;background:#aaa;"></div>
<div class="a" style="left:847px;top:209.5px;width:2.5px;height:2.5px;background:#888;"></div>
<div class="a" style="left:660px;top:214.4px;width:8px;height:5.6px;background:#2a2a2a;"></div>
<div class="a" style="left:671.75px;top:214.4px;width:176px;height:5.6px;background:linear-gradient(90deg,#000 0%,#0a0a0a 25%,#777 55%,#d0d0d0 82%,#fff 100%)"></div>
<div class="a" style="left:664px;top:224.4px;width:15px;height:5px;background:#565656;"></div>
<div class="t" style="left:667.5px;top:223.0px;color:#ccc;font-size:3.8px;font-weight:normal">Full</div>
<div class="a" style="left:682px;top:224.4px;width:1px;height:5px;background:#888;"></div>
<div class="a" style="left:685.5px;top:224.4px;width:35px;height:5px;background:#585858;"></div>
<div class="a" style="left:720.5px;top:224.4px;width:127px;height:5px;background:#1a1a1a;"></div>
<div class="t" style="left:763px;top:223.0px;color:#aaa;font-size:3.8px;font-weight:normal">16</div>
<div class="t" style="left:658px;top:233.5px;color:#c0c0c0;font-size:4.0px;font-weight:normal">Grunge Amount</div>
<div class="a" style="left:837px;top:236.5px;width:2.5px;height:2.5px;background:#aaa;"></div>
<div class="a" style="left:847px;top:236.5px;width:2.5px;height:2.5px;background:#888;"></div>
<div class="a" style="left:662px;top:241.9px;width:24.5px;height:5px;background:#555;"></div>
<div class="a" style="left:686.5px;top:241.9px;width:161.5px;height:5px;background:#1c1c1c;"></div>
<div class="t" style="left:750px;top:240.5px;color:#bbb;font-size:3.8px;font-weight:normal">0.12</div>
<div class="t" style="left:658px;top:250.8px;color:#c0c0c0;font-size:4.0px;font-weight:normal">Grunge Tiling</div>
<div class="a" style="left:837px;top:253.5px;width:2.5px;height:2.5px;background:#aaa;"></div>
<div class="a" style="left:847px;top:253.5px;width:2.5px;height:2.5px;background:#888;"></div>
<div class="a" style="left:662px;top:259px;width:186px;height:4.8px;background:#1c1c1c;"></div>
<div class="t" style="left:768px;top:257.6px;color:#aaa;font-size:3.8px;font-weight:normal">1</div>
<div class="t" style="left:658px;top:267.6px;color:#c0c0c0;font-size:4.0px;font-weight:normal">Custom Grunge Input</div>
<div class="a" style="left:837px;top:270.5px;width:2.5px;height:2.5px;background:#aaa;"></div>
<div class="a" style="left:847px;top:270.5px;width:2.5px;height:2.5px;background:#888;"></div>
<div class="a" style="left:728px;top:276.3px;width:52px;height:5px;background:#545454;"></div>
<div class="t" style="left:749px;top:274.8px;color:#ccc;font-size:3.8px;font-weight:normal">False</div>
<div class="a" style="left:651px;top:284.7px;width:197.5px;height:5.8px;background:#4e4e4e;"></div>
<div class="a" style="left:651.5px;top:286.6px;width:0;height:0;border-left:1.5px solid transparent;border-right:1.5px solid transparent;border-top:2px solid #ccc"></div>
<div class="t" style="left:658px;top:283.6px;color:#e8e8e8;font-size:4.0px;font-weight:bold">Height</div>
<!-- 2d view -->
<div class="a" style="left:644px;top:292px;width:209px;height:181px;background:#2b2b2b"></div>
<div class="a" style="left:644px;top:292px;width:209px;height:6px;background:#151515"></div>
<div class="a" style="left:644px;top:298px;width:209px;height:7px;background:#3a3a3a"></div>
<div class="a" style="left:682px;top:319px;width:133px;height:132px;background:#f3f3f3"></div>
<div class="a" style="left:644px;top:464px;width:209px;height:9px;background:#333"></div>

<!-- status -->
<div class="a" style="left:0;top:473px;width:853px;height:7px;background:#2c2c2c;border-top:1.5px solid #1e1e1e"></div>

<!-- chrome content -->
<div class="a" style="left:131px;top:25px;width:3.5px;height:3px;background:#cfcfcf"></div>
<div class="a" style="left:137px;top:25px;width:3px;height:3px;background:#aaa;border-radius:50%"></div>
<div class="a" style="left:142px;top:25.8px;width:2px;height:1.5px;background:#999"></div>
<div class="a" style="left:135px;top:249.5px;width:3px;height:3px;background:#bbb"></div>
<div class="a" style="left:141px;top:250px;width:2.5px;height:2.5px;background:#999"></div>

<div class="t" style="left:381px;top:0.2px;color:#3a2a1a;font-size:5.2px;font-weight:normal">Allegorithmic Substance Designer 5.1.1</div>
<div class="a" style="left:1px;top:1.5px;width:5px;height:5px;background:#e8e0d8;border-radius:50%"></div>
<div class="a" style="left:2.2px;top:2.7px;width:2.6px;height:2.6px;background:#d04040;border-radius:50%"></div>
<div class="a" style="left:837.5px;top:0px;width:15.5px;height:6.5px;background:#d9403a;"></div>
<div class="t" style="left:843px;top:-0.8px;color:#fff;font-size:4.0px;font-weight:normal">&#xD7;</div>
<div class="a" style="left:823px;top:3.5px;width:3px;height:0.8px;background:#5a3a20;"></div>
<div class="a" style="left:831px;top:2px;width:3px;height:3px;background:none;border:0.7px solid #5a3a20"></div>
<div class="t" style="left:3px;top:8.3px;color:#b8b8b8;font-size:4.1px;font-weight:normal">File</div>
<div class="t" style="left:18px;top:8.3px;color:#b8b8b8;font-size:4.1px;font-weight:normal">Edit</div>
<div class="t" style="left:29px;top:8.3px;color:#b8b8b8;font-size:4.1px;font-weight:normal">Tools</div>
<div class="t" style="left:45px;top:8.3px;color:#b8b8b8;font-size:4.1px;font-weight:normal">Windows</div>
<div class="t" style="left:68px;top:8.3px;color:#b8b8b8;font-size:4.1px;font-weight:normal">Help</div>
<div class="a" style="left:2px;top:17.5px;width:4px;height:4px;background:#ccc;"></div>
<div class="a" style="left:9px;top:18px;width:4px;height:3.5px;background:#999;"></div>
<div class="a" style="left:17px;top:17.5px;width:4px;height:4px;background:#bbb;"></div>
<div class="t" style="left:24px;top:16.0px;color:#ccc;font-size:5.0px;font-weight:normal">&#x2190;</div>
<div class="t" style="left:30px;top:16.0px;color:#888;font-size:4.0px;font-weight:normal">&#x25BA;</div>
<div class="t" style="left:148px;top:22.8px;color:#ccc;font-size:4.0px;font-weight:normal">&#x25C4;</div>
<div class="t" style="left:383px;top:23.4px;color:#c4c4c4;font-size:3.3px;font-weight:bold">Seamless</div>
<div class="a" style="left:629px;top:25.5px;width:3px;height:2.5px;background:#aaa;"></div>
<div class="a" style="left:634px;top:25.5px;width:2.5px;height:2.5px;background:#888;"></div>
<div class="a" style="left:638px;top:25.5px;width:2.5px;height:2.5px;background:#888;"></div>
<div class="a" style="left:149px;top:31px;width:4px;height:4px;background:#aaa;"></div>
<div class="t" style="left:154.5px;top:29.5px;color:#888;font-size:4.0px;font-weight:normal">&#x2194;</div>
<div class="t" style="left:161px;top:29.5px;color:#888;font-size:4.0px;font-weight:normal">&#x2195;</div>
<div class="t" style="left:168px;top:29.5px;color:#888;font-size:4.0px;font-weight:normal">&#x25BA;</div>
<div class="a" style="left:173px;top:31px;width:4px;height:4px;background:#999;border-radius:50%"></div>
<div class="a" style="left:179px;top:29.5px;width:7.5px;height:8px;background:#c6c6c6;"></div>
<div class="a" style="left:188px;top:33px;width:8px;height:1.2px;background:#4a9a7a;"></div>
<div class="t" style="left:196px;top:29.5px;color:#888;font-size:4.0px;font-weight:normal">&#x2195;</div>
<div class="a" style="left:203px;top:31px;width:4px;height:4px;background:#999;border-radius:50%"></div>
<div class="t" style="left:208px;top:29.5px;color:#888;font-size:4.0px;font-weight:normal">&#x25BC;</div>
<div class="a" style="left:212px;top:31px;width:4px;height:4px;background:#bbb;border-radius:50%"></div>
<div class="t" style="left:217px;top:29.5px;color:#888;font-size:4.0px;font-weight:normal">&#x25BA;</div>
<div class="a" style="left:148.7px;top:40px;width:3.6px;height:6px;background:#444;border-radius:2px"></div>
<div class="a" style="left:152.20px;top:39.3px;width:7px;height:7.8px;background:#7a4a6e;border-radius:0.8px"></div>
<div class="a" style="left:160.35px;top:39.3px;width:7px;height:7.8px;background:#c9c9c9;border-radius:0.8px"></div>
<div class="a" style="left:161.85px;top:41.5px;width:4px;height:3.5px;background:rgba(0,0,0,0.25);"></div>
<div class="a" style="left:168.50px;top:39.3px;width:7px;height:7.8px;background:#8a8a66;border-radius:0.8px"></div>
<div class="a" style="left:170.00px;top:41.5px;width:4px;height:3.5px;background:rgba(0,0,0,0.25);"></div>
<div class="a" style="left:176.65px;top:39.3px;width:7px;height:7.8px;background:#6b6150;border-radius:0.8px"></div>
<div class="a" style="left:178.15px;top:41.5px;width:4px;height:3.5px;background:rgba(0,0,0,0.25);"></div>
<div class="a" style="left:184.80px;top:39.3px;width:7px;height:7.8px;background:#6e6a2e;border-radius:0.8px"></div>
<div class="a" style="left:186.30px;top:41.5px;width:4px;height:3.5px;background:rgba(0,0,0,0.25);"></div>
<div class="a" style="left:192.95px;top:39.3px;width:7px;height:7.8px;background:#3a7a8a;border-radius:0.8px"></div>
<div class="a" style="left:201.10px;top:39.3px;width:7px;height:7.8px;background:#a4c040;border-radius:0.8px"></div>
<div class="a" style="left:202.60px;top:41.5px;width:4px;height:3.5px;background:rgba(0,0,0,0.25);"></div>
<div class="a" style="left:209.25px;top:39.3px;width:7px;height:7.8px;background:#6e6aaa;border-radius:0.8px"></div>
<div class="a" style="left:217.40px;top:39.3px;width:7px;height:7.8px;background:#3c423c;border-radius:0.8px"></div>
<div class="t" style="left:217.90px;top:39.6px;color:#ccc;font-size:3.3px;font-weight:normal">Sym</div>
<div class="a" style="left:225.55px;top:39.3px;width:7px;height:7.8px;background:#465a36;border-radius:0.8px"></div>
<div class="a" style="left:233.70px;top:39.3px;width:7px;height:7.8px;background:#3a6a26;border-radius:0.8px"></div>
<div class="a" style="left:241.85px;top:39.3px;width:7px;height:7.8px;background:#9a9a9a;border-radius:0.8px"></div>
<div class="a" style="left:243.35px;top:41.5px;width:4px;height:3.5px;background:rgba(0,0,0,0.25);"></div>
<div class="a" style="left:250.00px;top:39.3px;width:7px;height:7.8px;background:#6a9a48;border-radius:0.8px"></div>
<div class="a" style="left:251.50px;top:41.5px;width:4px;height:3.5px;background:rgba(0,0,0,0.25);"></div>
<div class="a" style="left:258.15px;top:39.3px;width:7px;height:7.8px;background:#7aac68;border-radius:0.8px"></div>
<div class="a" style="left:259.65px;top:41.5px;width:4px;height:3.5px;background:rgba(0,0,0,0.25);"></div>
<div class="a" style="left:266.30px;top:39.3px;width:7px;height:7.8px;background:#7a7aee;border-radius:0.8px"></div>
<div class="a" style="left:274.45px;top:39.3px;width:7px;height:7.8px;background:#252525;border-radius:0.8px"></div>
<div class="t" style="left:274.95px;top:39.6px;color:#ccc;font-size:3.3px;font-weight:normal">Pix</div>
<div class="a" style="left:282.60px;top:39.3px;width:7px;height:7.8px;background:#7a5a6e;border-radius:0.8px"></div>
<div class="a" style="left:290.75px;top:39.3px;width:7px;height:7.8px;background:#c4a444;border-radius:0.8px"></div>
<div class="a" style="left:298.90px;top:39.3px;width:7px;height:7.8px;background:#4a6aaa;border-radius:0.8px"></div>
<div class="a" style="left:307.05px;top:39.3px;width:7px;height:7.8px;background:#aa3040;border-radius:0.8px"></div>
<div class="a" style="left:315.20px;top:39.3px;width:7px;height:7.8px;background:#3a8a8a;border-radius:0.8px"></div>
<div class="a" style="left:323.35px;top:39.3px;width:7px;height:7.8px;background:#9a98aa;border-radius:0.8px"></div>
<div class="a" style="left:324.85px;top:41.5px;width:4px;height:3.5px;background:rgba(0,0,0,0.25);"></div>
<div class="a" style="left:331.50px;top:39.3px;width:7px;height:7.8px;background:#a8a6b8;border-radius:0.8px"></div>
<div class="a" style="left:333.00px;top:41.5px;width:4px;height:3.5px;background:rgba(0,0,0,0.25);"></div>
<div class="a" style="left:339.65px;top:39.3px;width:7px;height:7.8px;background:#8a88a0;border-radius:0.8px"></div>
<div class="a" style="left:341.15px;top:41.5px;width:4px;height:3.5px;background:rgba(0,0,0,0.25);"></div>
<div class="a" style="left:348.80px;top:40.5px;width:5px;height:4px;background:#e8e8e8;"></div>
<div class="a" style="left:356.80px;top:40px;width:6px;height:6px;background:#e8e8e8;"></div>
<div class="a" style="left:365.80px;top:40px;width:1px;height:6px;background:#aaa;"></div>
<div class="t" style="left:150px;top:221.0px;color:#ddd;font-size:4.0px;font-weight:normal">&#x25A0;</div>
<div class="t" style="left:385px;top:221.6px;color:#c4c4c4;font-size:3.3px;font-weight:bold">3D View</div>
<div class="a" style="left:629px;top:223.5px;width:3px;height:2.5px;background:#aaa;"></div>
<div class="a" style="left:634px;top:223.5px;width:2.5px;height:2.5px;background:#888;"></div>
<div class="a" style="left:638px;top:223.5px;width:2.5px;height:2.5px;background:#888;"></div>
<div class="t" style="left:149px;top:229px;color:#a8a8a8;font-size:3.7px">Geometry</div>
<div class="a" style="left:166.5px;top:231.5px;width:3px;height:3px;background:#555;border-radius:50%"></div>
<div class="a" style="left:167.2px;top:232.3px;width:0;height:0;border-left:0.8px solid transparent;border-right:0.8px solid transparent;border-top:1.2px solid #ddd"></div>
<div class="t" style="left:172px;top:229px;color:#a8a8a8;font-size:3.7px">Materials</div>
<div class="a" style="left:188.0px;top:231.5px;width:3px;height:3px;background:#555;border-radius:50%"></div>
<div class="a" style="left:188.7px;top:232.3px;width:0;height:0;border-left:0.8px solid transparent;border-right:0.8px solid transparent;border-top:1.2px solid #ddd"></div>
<div class="t" style="left:192.5px;top:229px;color:#a8a8a8;font-size:3.7px">Scene</div>
<div class="a" style="left:204.0px;top:231.5px;width:3px;height:3px;background:#555;border-radius:50%"></div>
<div class="a" style="left:204.7px;top:232.3px;width:0;height:0;border-left:0.8px solid transparent;border-right:0.8px solid transparent;border-top:1.2px solid #ddd"></div>
<div class="t" style="left:209px;top:229px;color:#a8a8a8;font-size:3.7px">View</div>
<div class="a" style="left:217.5px;top:231.5px;width:3px;height:3px;background:#555;border-radius:50%"></div>
<div class="a" style="left:218.2px;top:232.3px;width:0;height:0;border-left:0.8px solid transparent;border-right:0.8px solid transparent;border-top:1.2px solid #ddd"></div>
<div class="t" style="left:223px;top:229px;color:#a8a8a8;font-size:3.7px">Display</div>
<div class="a" style="left:236.5px;top:231.5px;width:3px;height:3px;background:#555;border-radius:50%"></div>
<div class="a" style="left:237.2px;top:232.3px;width:0;height:0;border-left:0.8px solid transparent;border-right:0.8px solid transparent;border-top:1.2px solid #ddd"></div>
<div class="a" style="left:147px;top:238px;width:7px;height:225px;background:#1d1d1d"></div>
<div class="a" style="left:148px;top:243px;width:5px;height:7px;background:#bdbdbd;"></div>
<div class="a" style="left:149px;top:253px;width:3px;height:3px;background:#888;"></div>
<div class="a" style="left:149px;top:466px;width:3.5px;height:4px;background:#bbb;"></div>
<div class="a" style="left:156px;top:466px;width:3.5px;height:4px;background:#aaa;"></div>
<div class="t" style="left:736.5px;top:291.6px;color:#c4c4c4;font-size:3.3px;font-weight:bold">Bitmap</div>
<div class="a" style="left:645px;top:293px;width:3px;height:3px;background:#ccc;"></div>
<div class="a" style="left:836px;top:293.5px;width:3px;height:2.5px;background:#aaa;"></div>
<div class="a" style="left:841px;top:293.5px;width:2.5px;height:2.5px;background:#888;"></div>
<div class="a" style="left:846px;top:293.5px;width:2.5px;height:2.5px;background:#888;"></div>
<div class="a" style="left:645px;top:299.5px;width:4.5px;height:4px;background:#bbb;"></div>
<div class="a" style="left:654px;top:299.5px;width:3.5px;height:4px;background:#aaa;"></div>
<div class="a" style="left:664px;top:300.5px;width:3px;height:2px;background:#555;"></div>
<div class="a" style="left:673px;top:299.5px;width:4px;height:4px;background:#ccc;"></div>
<div class="t" style="left:647px;top:454.5px;color:#a8a8a8;font-size:3.8px;font-weight:normal">2048 x 2048 (RGBA, 16bpc)</div>
<div class="a" style="left:645px;top:466px;width:2px;height:4.5px;background:#4a8a3a;"></div>
<div class="a" style="left:647px;top:466px;width:2px;height:4.5px;background:#3a5aaa;"></div>
<div class="a" style="left:650px;top:467px;width:2px;height:2px;background:#aaa;"></div>
<div class="a" style="left:656.5px;top:465.5px;width:6px;height:6px;background:#e0e0e0;"></div>
<div class="a" style="left:665.5px;top:466px;width:4px;height:5px;background:#4a9a4a;"></div>
<div class="a" style="left:673px;top:465px;width:7px;height:7px;background:#9a9a9a;"></div>
<div class="a" style="left:684px;top:466px;width:2px;height:5px;background:#4a9a4a;"></div>
<div class="a" style="left:690px;top:466px;width:1px;height:5px;background:#888;"></div>
<div class="a" style="left:697px;top:467px;width:4px;height:3px;background:#cfc0a0;"></div>
<div class="a" style="left:794px;top:465.5px;width:4px;height:5px;background:#888;"></div>
<div class="a" style="left:800px;top:466.5px;width:4px;height:3px;background:#777;"></div>
<div class="a" style="left:810px;top:466.5px;width:3px;height:3px;background:#aaa;"></div>
<div class="t" style="left:817px;top:464.5px;color:#aaa;font-size:3.8px;font-weight:normal">16.30%</div>
<div class="a" style="left:839px;top:466.5px;width:3px;height:3px;background:#bbb;"></div>
<div class="a" style="left:846px;top:464.5px;width:7px;height:8px;background:#bbb;"></div>
<div class="a" style="left:770px;top:474.5px;width:83px;height:5.5px;background:#262626;"></div>
<div class="t" style="left:815px;top:473.3px;color:#aaa;font-size:3.8px;font-weight:normal">Engine: Direct3D 10</div>
</body></html>
